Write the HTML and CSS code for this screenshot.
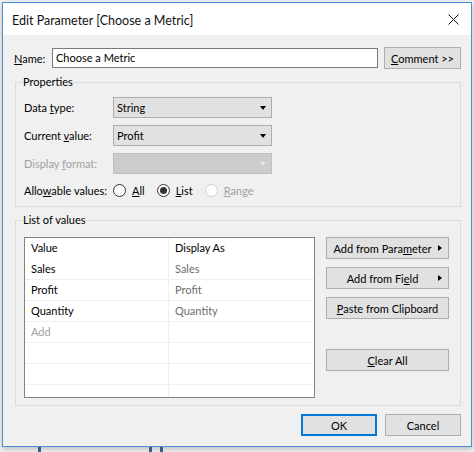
FILE: index.html
```html
<!DOCTYPE html>
<html lang="en">
<head>
<meta charset="utf-8">
<title>Edit Parameter</title>
<link rel="stylesheet" href="styles.css">
</head>
<body>
<div class="screen">
  <div class="dialog">
    <div class="titlebar">
      <span class="title">Edit Parameter [Choose a Metric]</span>
      <svg class="close" width="11" height="11" viewBox="0 0 11 11"><path d="M0.5 0.5 L10.5 10.5 M10.5 0.5 L0.5 10.5" stroke="#111" stroke-width="1" fill="none"/></svg>
    </div>
    <div class="content">
      <div class="name-row">
        <label class="name-label"><u>N</u>ame:</label>
        <div class="textbox">Choose a Metric</div>
        <button class="btn comment"><u>C</u>omment &gt;&gt;</button>
      </div>

      <fieldset class="group props">
        <legend>Properties</legend>
        <div class="prop-row">
          <span class="prop-label">Data <u>t</u>ype:</span>
          <div class="combo"><span>String</span><i class="down"></i></div>
        </div>
        <div class="prop-row">
          <span class="prop-label">Current <u>v</u>alue:</span>
          <div class="combo"><span>Profit</span><i class="down"></i></div>
        </div>
        <div class="prop-row">
          <span class="prop-label disabled">Display <u>f</u>ormat:</span>
          <div class="combo off"><span></span><i class="down"></i></div>
        </div>
        <div class="prop-row radios">
          <span class="prop-label">Allo<u>w</u>able values:</span>
          <span class="radio"><i class="dot"></i><u>A</u>ll</span>
          <span class="radio"><i class="dot on"></i><u>L</u>ist</span>
          <span class="radio disabled"><i class="dot off"></i><u>R</u>ange</span>
        </div>
      </fieldset>

      <fieldset class="group values">
        <legend>List of values</legend>
        <div class="values-body">
          <div class="grid">
            <div class="cell head">Value</div><div class="cell head">Display As</div>
            <div class="cell">Sales</div><div class="cell alt">Sales</div>
            <div class="cell">Profit</div><div class="cell alt">Profit</div>
            <div class="cell">Quantity</div><div class="cell alt">Quantity</div>
            <div class="cell hint">Add</div><div class="cell"></div>
            <div class="cell"></div><div class="cell"></div>
            <div class="cell"></div><div class="cell"></div>
            <div class="cell last"></div><div class="cell last"></div>
          </div>
          <div class="side">
            <button class="btn side-btn menu"><span>Add from Para<u>m</u>eter</span><i class="right"></i></button>
            <button class="btn side-btn menu"><span>Add from Fi<u>e</u>ld</span><i class="right"></i></button>
            <button class="btn side-btn"><u>P</u>aste from Clipboard</button>
            <button class="btn side-btn clear"><u>C</u>lear All</button>
          </div>
        </div>
      </fieldset>

      <div class="footer">
        <button class="btn foot default">OK</button>
        <button class="btn foot">Cancel</button>
      </div>
    </div>
  </div>
  <div class="backdrop">
    <i class="mark m1"></i><i class="mark m2"></i><i class="mark m3"></i>
  </div>
</div>
</body>
</html>
```

FILE: styles.css
```css
* { box-sizing: border-box; }
html, body { margin: 0; padding: 0; }
body {
  width: 474px;
  height: 452px;
  overflow: hidden;
  background: #f1f1f1;
  font-family: "Lato", "Noto Sans", sans-serif;
  font-size: 11px;
  color: #000;
}
u { text-decoration: underline; text-underline-offset: 1px; }

.screen { padding: 2px 2px 0 2px; }

.dialog {
  height: 445px;
  border: 1px solid #4a8fd8;
  background: #f0f0f0;
  box-shadow: 0 2px 5px rgba(0,0,0,0.22);
  display: flex;
  flex-direction: column;
}

.titlebar {
  height: 32px;
  background: #fff;
  display: flex;
  align-items: center;
  justify-content: space-between;
  padding: 2px 12px 0 9px;
}
.title { font-size: 12.5px; color: #111; }
.close { display: block; margin-top: -2px; }

.content { padding: 12px 10px 0 11px; }

.name-row {
  display: flex;
  align-items: center;
  height: 22px;
}
.name-label { width: 38px; }
.textbox {
  flex: 1;
  height: 20px;
  border: 1px solid #7a7a7a;
  background: #fff;
  padding: 0 3px;
  line-height: 18px;
  margin-right: 6px;
}

.btn {
  font: inherit;
  color: #000;
  background: #e1e1e1;
  border: 1px solid #adadad;
  border-radius: 0;
  padding: 0;
  margin: 0;
  height: 22px;
}
.comment { width: 77px; }

.group {
  margin: 5px 0 0 1px;
  border: 1px solid #dcdcdc;
  padding: 7px 10px 7px 8px;
  min-width: 0;
}
.group legend {
  padding: 0;
  margin-left: -1px;
  line-height: 16px;
}

.prop-row {
  display: flex;
  align-items: center;
  height: 21px;
  margin-bottom: 7px;
}
.prop-row.radios { height: 18px; margin-bottom: 0; }
.prop-label { width: 89px; white-space: nowrap; }
.disabled { color: #a0a0a0; }

.combo {
  width: 159px;
  height: 21px;
  background: #e1e1e1;
  border: 1px solid #adadad;
  display: flex;
  align-items: center;
  justify-content: space-between;
  padding: 0 4px 0 3px;
}
.combo.off { background: #cccccc; border-color: #bfbfbf; }
.down {
  display: block;
  width: 0; height: 0;
  border-left: 3.5px solid transparent;
  border-right: 3.5px solid transparent;
  border-top: 4px solid #000;
  margin-right: 1px;
}
.combo.off .down { border-top-color: #e6e6e6; }

.radio {
  display: flex;
  align-items: center;
  margin-right: 12px;
}
.dot {
  width: 13px; height: 13px;
  border: 1px solid #333;
  border-radius: 50%;
  background: #fff;
  margin-right: 6px;
  display: flex;
  align-items: center;
  justify-content: center;
}
.dot.on::after {
  content: "";
  width: 7px; height: 7px;
  border-radius: 50%;
  background: #333;
}
.dot.off { border-color: #cfcfcf; }

.values { padding: 9px 10px 7px 8px; }
.values-body { display: flex; gap: 11px; }

.grid {
  width: 291px;
  height: 161px;
  border: 1px solid #828282;
  background: #fff;
  display: grid;
  grid-template-columns: 144px 1fr;
  grid-template-rows: repeat(7, 21px) 1fr;
}
.cell {
  border-bottom: 1px solid #f0f0f0;
  border-right: 1px solid #f0f0f0;
  padding: 0 6px;
  line-height: 20px;
}
.cell:nth-child(2n) { border-right: 0; padding-left: 6px; }
.cell.head { border-bottom-color: #fff; }
.cell.last { border-bottom: 0; }
.alt { color: #6d6d6d; }
.hint { color: #a0a0a0; }

.side {
  width: 123px;
  display: flex;
  flex-direction: column;
  gap: 8px;
}
.side-btn { width: 123px; }
.menu {
  display: flex;
  align-items: center;
  padding: 0 6px 0 0;
}
.menu span { flex: 1; text-align: center; }
.right {
  display: block;
  width: 0; height: 0;
  border-top: 3.5px solid transparent;
  border-bottom: 3.5px solid transparent;
  border-left: 4px solid #000;
}
.clear { margin-top: 22px; }

.footer {
  margin-top: 8px;
  display: flex;
  justify-content: flex-end;
  gap: 8px;
}
.foot { width: 76px; height: 22px; }
.default { border-color: #0078d7; box-shadow: inset 0 0 0 1px #0078d7; }

.backdrop {
  height: 6px;
  display: flex;
}
.mark { display: block; height: 6px; background: #3a5b82; }
.m1 { width: 3px; margin-left: 36px; }
.m2 { width: 3px; margin-left: 108px; }
.m3 { width: 3px; margin-left: 8px; }
```
